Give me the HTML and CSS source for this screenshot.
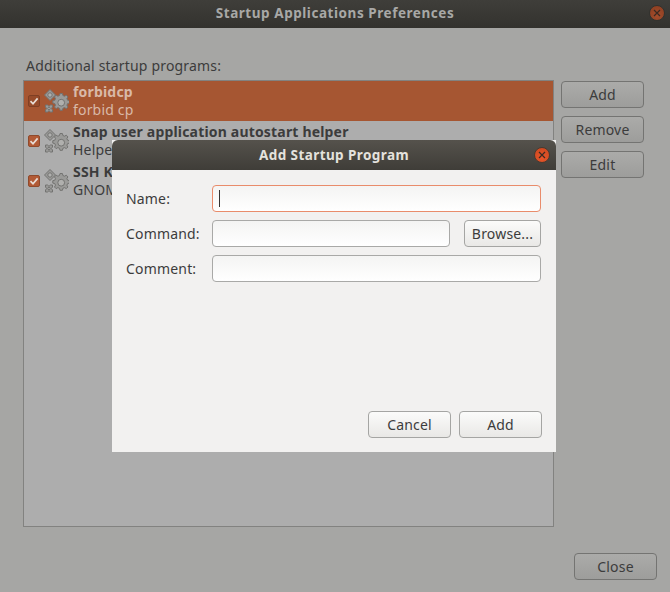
FILE: index.html
```html
<!DOCTYPE html>
<html lang="en">
<head>
    <meta charset="UTF-8">
    <title>Startup Applications Preferences</title>
    <link rel="stylesheet" href="styles.css">
</head>
<body>
    <svg class="defs" width="0" height="0">
        <symbol id="gears" viewBox="0 0 26 26">
            <g fill="none" stroke-linejoin="round">
                <path class="gear-fill" d="M7 1.5 12.5 7 7 12.5 1.5 7Z" stroke-width="1"/>
                <circle class="gear-hole" cx="7" cy="7" r="2.2"/>
                <path class="gear-fill" d="M2.5 17h2l1.5 1.3L7.500 17h2v2l-1.200 1.500L9.500 22v2h-2L6 22.700 4.500 24h-2v-2l1.200-1.500L2.500 19Z"/>
                <circle class="gear-hole" cx="6" cy="20.500" r="1.200"/>
                <path class="gear-fill" d="M17 5.500h2.400l.5 2 1.600.7 1.800-1 1.600 1.700-1 1.700.7 1.600 2 .5v2.400l-2 .5-.7 1.600 1 1.800-1.600 1.600-1.800-1-1.600.7-.5 2H17l-.5-2-1.600-.7-1.800 1-1.600-1.600 1-1.800-.7-1.600-2-.5v-2.400l2-.5.7-1.600-1-1.700 1.600-1.700 1.800 1 1.600-.7Z"/>
                <circle class="gear-hole" cx="18.200" cy="14.700" r="3.400"/>
            </g>
        </symbol>
    </svg>

    <div class="window">
        <div class="titlebar">
            <span class="title">Startup Applications Preferences</span>
            <span class="close-dot dim">
                <svg width="8" height="8" viewBox="0 0 8 8"><path d="M1 1l6 6M7 1L1 7"/></svg>
            </span>
        </div>

        <div class="content">
            <div class="section-label">Additional startup programs:</div>
            <div class="columns">
                <div class="program-list">
                    <div class="program selected">
                        <span class="check"><svg width="10" height="10" viewBox="0 0 10 10"><path d="M1.500 5.200 4 7.800 8.600 2.400"/></svg></span>
                        <svg class="gears" width="26" height="26"><use href="#gears"/></svg>
                        <div class="program-text"><b>forbidcp</b><span>forbid cp</span></div>
                    </div>
                    <div class="program">
                        <span class="check"><svg width="10" height="10" viewBox="0 0 10 10"><path d="M1.500 5.200 4 7.800 8.600 2.400"/></svg></span>
                        <svg class="gears" width="26" height="26"><use href="#gears"/></svg>
                        <div class="program-text"><b>Snap user application autostart helper</b><span>Helpe</span></div>
                    </div>
                    <div class="program">
                        <span class="check"><svg width="10" height="10" viewBox="0 0 10 10"><path d="M1.500 5.200 4 7.800 8.600 2.400"/></svg></span>
                        <svg class="gears" width="26" height="26"><use href="#gears"/></svg>
                        <div class="program-text"><b>SSH K</b><span>GNOM</span></div>
                    </div>
                </div>
                <div class="side-buttons">
                    <button class="btn dim-btn">Add</button>
                    <button class="btn dim-btn">Remove</button>
                    <button class="btn dim-btn">Edit</button>
                </div>
            </div>
            <div class="footer">
                <button class="btn dim-btn">Close</button>
            </div>
        </div>
    </div>

    <!-- modal on top of the preferences window -->
    <div class="dialog">
        <div class="dialog-title">
            <span class="title">Add Startup Program</span>
            <span class="close-dot">
                <svg width="8" height="8" viewBox="0 0 8 8"><path d="M1 1l6 6M7 1L1 7"/></svg>
            </span>
        </div>
        <div class="dialog-body">
            <div class="form">
                <label>Name:</label>
                <div class="input focused"><i class="caret"></i></div>
                <label>Command:</label>
                <div class="command-row">
                    <div class="input"></div>
                    <button class="btn">Browse...</button>
                </div>
                <label>Comment:</label>
                <div class="input"></div>
            </div>
            <div class="dialog-actions">
                <button class="btn">Cancel</button>
                <button class="btn">Add</button>
            </div>
        </div>
    </div>
</body>
</html>
```

FILE: styles.css
```css
:root {
    --selected: #a65632;
    --text: #3c3c3c;
    --dialog-bg: #f2f1f0;
}

* {
    box-sizing: border-box;
}

body {
    margin: 0;
    width: 670px;
    height: 592px;
    overflow: hidden;
    position: relative;
    font-family: "Noto Sans", "Open Sans", sans-serif;
    font-size: 14px;
    letter-spacing: 0.18px;
    color: var(--text);
    background: #a6a6a4;
}

.defs {
    position: absolute;
}

.window {
    height: 592px;
    display: flex;
    flex-direction: column;
}

.titlebar {
    height: 28px;
    flex: none;
    padding-bottom: 2px;
    background: linear-gradient(#3f3e3a, #33322e);
    display: flex;
    align-items: center;
    justify-content: center;
    position: relative;
}

.title {
    font-weight: 700;
    font-size: 13.5px;
    letter-spacing: 0.55px;
    color: #a8a8a6;
}

.close-dot {
    position: absolute;
    right: 5px;
    top: 5px;
    width: 16px;
    height: 16px;
    border-radius: 50%;
    background: radial-gradient(circle at 50% 70%, #e8562a, #c9471f);
    border: 1px solid #4a3a30;
    display: flex;
    align-items: center;
    justify-content: center;
}

.close-dot svg path {
    stroke: #3a2a22;
    stroke-width: 1.2;
    fill: none;
}

.close-dot.dim {
    background: radial-gradient(circle at 50% 70%, #a54d2c, #8a3d20);
    border-color: #33322e;
}

.content {
    flex: 1;
    padding: 29px 13px 12px 23px;
    display: flex;
    flex-direction: column;
}

.section-label {
    height: 23px;
    padding-left: 3px;
    line-height: 18px;
}

.columns {
    flex: 1;
    display: flex;
    gap: 7px;
}

.program-list {
    width: 531px;
    height: 447px;
    border: 1px solid #828280;
    background: #adadad;
}

.program {
    height: 40px;
    display: flex;
    align-items: center;
    padding-left: 4px;
}

.program.selected {
    background: var(--selected);
    color: #d9b9a8;
}

.check {
    width: 12px;
    height: 12px;
    border-radius: 2px;
    flex: none;
    background: #b25a35;
    border: 1px solid #8f4a2c;
    display: flex;
    align-items: center;
    justify-content: center;
}

.selected .check {
    background: #974b2a;
    border-color: #7f3f24;
}

.check path {
    fill: none;
    stroke: #e8ddd6;
    stroke-width: 1.7;
}

.gears {
    margin-left: 3px;
    flex: none;
}

.gear-fill {
    fill: #9a9a98;
    stroke: #737371;
}

.gear-hole {
    fill: #b0b0ae;
    stroke: #737371;
}

.selected .gear-fill {
    fill: #a58f83;
    stroke: #8f7b6e;
}

.selected .gear-hole {
    fill: #b0846c;
    stroke: #8f7b6e;
}

.program-text {
    margin-left: 4px;
    display: flex;
    flex-direction: column;
    line-height: 18px;
    white-space: nowrap;
}

.btn {
    height: 27px;
    width: 83px;
    padding: 0;
    font: inherit;
    letter-spacing: inherit;
    color: var(--text);
    border: 1px solid #a5a5a3;
    border-radius: 4px;
    background: linear-gradient(#fbfbfa, #e9e8e6);
}

.dim-btn {
    border-color: #747472;
    background: linear-gradient(#ababa9, #9d9d9b);
}

.side-buttons {
    padding-top: 1px;
    display: flex;
    flex-direction: column;
    gap: 8px;
}

.footer {
    display: flex;
    justify-content: flex-end;
}

/* Add Startup Program dialog */
.dialog {
    position: absolute;
    left: 112px;
    top: 140px;
    width: 444px;
    height: 312px;
    display: flex;
    flex-direction: column;
    background: var(--dialog-bg);
}

.dialog-title {
    height: 30px;
    flex: none;
    border-radius: 6px 6px 0 0;
    background: linear-gradient(#55524c, #3f3d38);
    display: flex;
    align-items: center;
    justify-content: center;
    position: relative;
}

.dialog-title .title {
    letter-spacing: 0.42px;
    color: #e4e2dd;
}

.dialog-title .close-dot {
    right: 6px;
    top: 7px;
}

.dialog-body {
    flex: 1;
    padding: 15px 14px 14px 14px;
    display: flex;
    flex-direction: column;
    justify-content: space-between;
}

.form {
    display: grid;
    grid-template-columns: 86px 329px;
    row-gap: 8px;
    align-items: center;
}

.form label {
    line-height: 18px;
}

.input {
    height: 27px;
    flex: 1;
    border: 1px solid #a9a9a7;
    border-radius: 4px;
    background: linear-gradient(#f4f4f3, #ffffff);
    display: flex;
    align-items: center;
    padding-left: 6px;
}

.input.focused {
    border-color: #e98c6b;
}

.caret {
    width: 1px;
    height: 17px;
    background: #333;
}

.command-row {
    display: flex;
    gap: 14px;
}

.command-row .btn {
    width: 77px;
}

.dialog-actions {
    display: flex;
    justify-content: flex-end;
    gap: 8px;
}
```
